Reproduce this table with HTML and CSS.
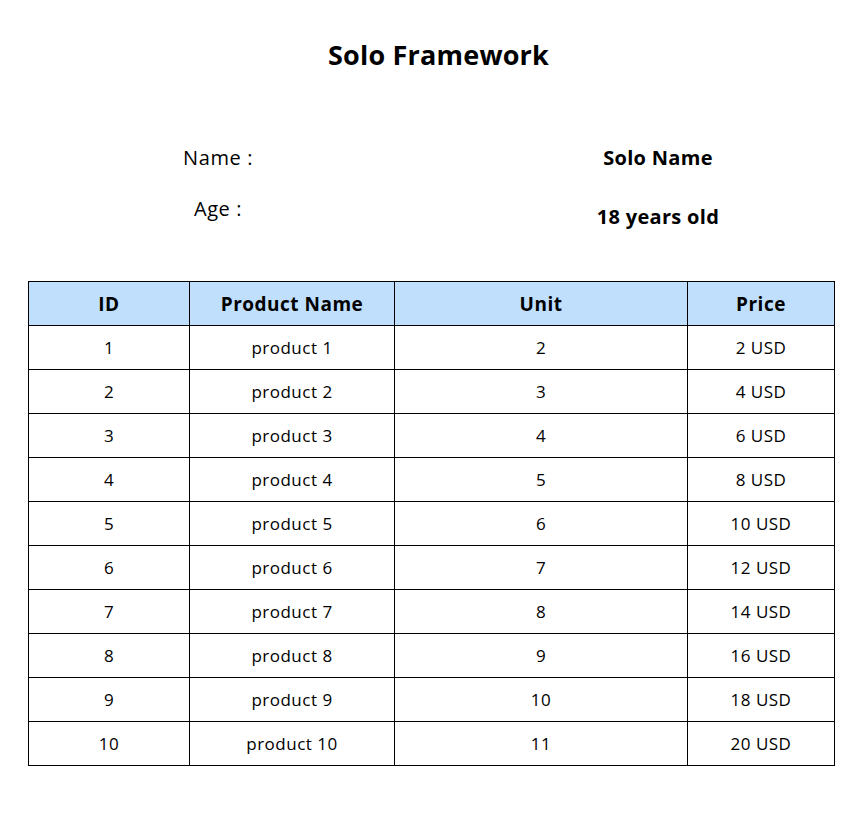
FILE: index.html
```html
<!DOCTYPE html>
<html>
<head>
<meta charset="utf-8">
<link rel="stylesheet" href="styles.css">
</head>
<body>
<h1 class="title">Solo Framework</h1>
<div class="info">
  <div class="info-col labels">
    <div class="label">Name :</div>
    <div class="label">Age :</div>
  </div>
  <div class="info-col values">
    <div class="value">Solo Name</div>
    <div class="value">18 years old</div>
  </div>
</div>
<table class="products">
  <thead>
    <tr><th class="c-id">ID</th><th class="c-name">Product Name</th><th class="c-unit">Unit</th><th class="c-price">Price</th></tr>
  </thead>
  <tbody>
    <tr><td>1</td><td>product 1</td><td>2</td><td>2 USD</td></tr>
    <tr><td>2</td><td>product 2</td><td>3</td><td>4 USD</td></tr>
    <tr><td>3</td><td>product 3</td><td>4</td><td>6 USD</td></tr>
    <tr><td>4</td><td>product 4</td><td>5</td><td>8 USD</td></tr>
    <tr><td>5</td><td>product 5</td><td>6</td><td>10 USD</td></tr>
    <tr><td>6</td><td>product 6</td><td>7</td><td>12 USD</td></tr>
    <tr><td>7</td><td>product 7</td><td>8</td><td>14 USD</td></tr>
    <tr><td>8</td><td>product 8</td><td>9</td><td>16 USD</td></tr>
    <tr><td>9</td><td>product 9</td><td>10</td><td>18 USD</td></tr>
    <tr><td>10</td><td>product 10</td><td>11</td><td>20 USD</td></tr>
  </tbody>
</table>
</body>
</html>
```
FILE: styles.css
```css
* { box-sizing: border-box; }
body {
  margin: 0;
  font-family: "Open Sans", "Noto Sans", sans-serif;
  color: #000;
  background: #fff;
}
.title {
  margin: 0;
  padding-top: 38px;
  height: 74px;
  text-align: center;
  font-size: 27px;
  font-weight: 700;
  line-height: 34px;
  letter-spacing: 0.2px;
  padding-left: 10px;
}
.info {
  display: flex;
  padding-left: 108px;
  gap: 220px;
  margin-top: 72px;
}
.info-col {
  width: 220px;
  display: flex;
  flex-direction: column;
  align-items: center;
}
.label {
  font-size: 20px;
  line-height: 24px;
  height: 51px;
  letter-spacing: 0.6px;
}
.value {
  font-size: 20px;
  font-weight: 700;
  line-height: 24px;
  height: 59px;
  letter-spacing: 0.3px;
}
.products {
  margin: 17px 0 0 28px;
  width: 806px;
  border-collapse: collapse;
  table-layout: fixed;
  font-size: 17px;
  letter-spacing: 0.5px;
}
.products th, .products td {
  border: 1px solid #000;
  height: 44px;
  padding: 0;
  text-align: center;
  vertical-align: middle;
}
.products th {
  background: #bfdffc;
  font-weight: 700;
  font-size: 19px;
  letter-spacing: 0.5px;
}
.c-id { width: 161px; }
.c-name { width: 205px; }
.c-unit { width: 293px; }
.c-price { width: 147px; }
```
